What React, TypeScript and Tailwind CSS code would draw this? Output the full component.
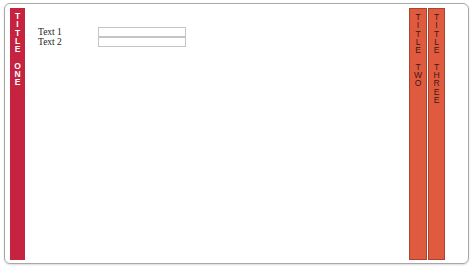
import React from 'react'

function VerticalTitle({ text, className }: { text: string; className: string }) {
  return (
    <div className={className}>
      <div className="flex flex-col items-center pt-[4px]">
        {text.split('').map((ch, i) => (
          <span key={i} className="block h-[8.3px] leading-[8.3px]">
            {ch === ' ' ? '\u00a0' : ch}
          </span>
        ))}
      </div>
    </div>
  )
}

export default function App() {
  return (
    <div className="w-[474px] h-[268px] bg-white pt-[3px] pl-[4px]">
      <div className="flex w-[465px] h-[261px] rounded-[6px] border border-[#a8a8a8] pt-[4px] pb-[3px] pl-[5px] pr-[23px] shadow-[0_1px_2px_rgba(0,0,0,0.15)]">
        {/* Left tab */}
        <VerticalTitle
          text="TITLE ONE"
          className="w-[15px] bg-[#c5233f] text-white font-bold text-[8.5px] font-['Liberation_Sans',Arial,sans-serif]"
        />

        {/* Content */}
        <div className="flex-1 pl-[13px] pt-[19px] font-['Liberation_Serif','Times_New_Roman',serif] text-[9.5px] text-[#222]">
          <div className="flex items-center h-[10px]">
            <span className="w-[60px]">Text 1</span>
            <div className="w-[88px] h-[10px] border border-[#c4c4c4] bg-white" />
          </div>
          <div className="flex items-center h-[10px]">
            <span className="w-[60px]">Text 2</span>
            <div className="w-[88px] h-[10px] border border-[#c4c4c4] bg-white" />
          </div>
        </div>

        {/* Right tabs */}
        <div className="flex gap-[1px]">
          <VerticalTitle
            text="TITLE TWO"
            className="w-[18px] bg-[#e05a3f] border border-[#a8452f] text-[#3a1a12] text-[8.5px] font-['Liberation_Sans',Arial,sans-serif]"
          />
          <VerticalTitle
            text="TITLE THREE"
            className="w-[17px] bg-[#e05a3f] border border-[#a8452f] text-[#3a1a12] text-[8.5px] font-['Liberation_Sans',Arial,sans-serif]"
          />
        </div>
      </div>
    </div>
  )
}
